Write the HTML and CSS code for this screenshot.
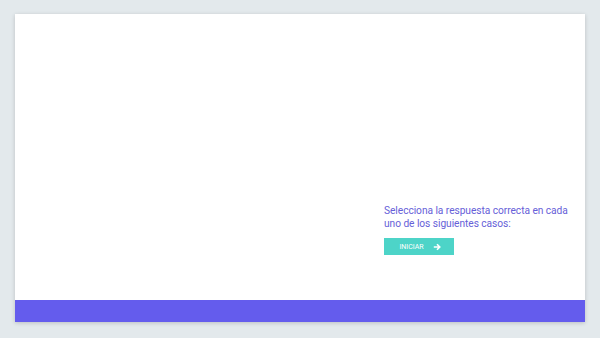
FILE: index.html
```html
<html>
	<head>
		<title>Actividad</title>
		<link rel="stylesheet" href="styles.css">
	</head>
	<body>
		<div class="slide">
			<div class="content">
				<div class="intro">
					<p class="prompt">Selecciona la respuesta correcta en cada uno de los siguientes casos:</p>
					<button class="start">INICIAR
						<svg width="8" height="8" viewBox="0 0 10 10"><path d="M1 5h7M5 1.5L8.5 5 5 8.5" stroke="#fff" stroke-width="2" fill="none"/></svg>
					</button>
				</div>
			</div>
			<div class="footer"></div>
		</div>
	</body>
</html>
```

FILE: styles.css
```css
body {
  margin: 0;
  padding: 14px 15px 16px 15px;
  background-color: #e3e9ec;
  font-family: Roboto, "Liberation Sans", sans-serif;
}

div.slide {
  height: 308px;
  background-color: #ffffff;
  display: flex;
  flex-direction: column;
  box-shadow: 0 1px 4px rgba(0, 0, 0, 0.18);
}

div.content {
  flex: 1;
  display: flex;
  align-items: flex-end;
  padding: 0 0 45px 369px;
}

p.prompt {
  margin: 0 0 8px 0;
  width: 190px;
  font-size: 10.2px;
  line-height: 13px;
  letter-spacing: -0.05px;
  color: #6660d8;
}

button.start {
  width: 70px;
  height: 17px;
  border: none;
  background-color: #4dd4c8;
  color: #ffffff;
  font-family: Roboto, "Liberation Sans", sans-serif;
  font-size: 7px;
  display: flex;
  align-items: center;
  justify-content: center;
  gap: 9px;
  padding: 0 0 0 2px;
}

div.footer {
  height: 22px;
  background-color: #645ced;
}
```
